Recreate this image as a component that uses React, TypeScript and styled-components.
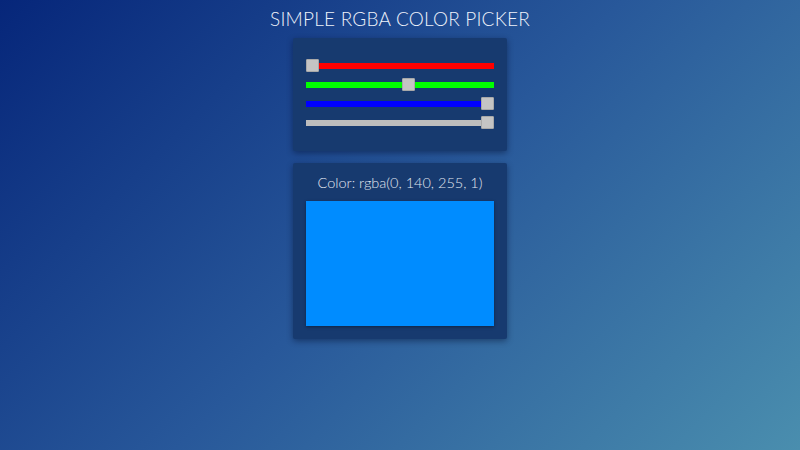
import { useState } from "react";
import styled, { createGlobalStyle } from "styled-components";

const GlobalStyle = createGlobalStyle`
  html, body {
    margin: 0;
    padding: 0;
    height: 100%;
  }
  body {
    font-family: Lato, "Open Sans", sans-serif;
    background: linear-gradient(135deg, #06267a 0%, #28589a 50%, #4a8eae 100%);
    min-height: 450px;
    color: #e8eef8;
  }
`;

type Channel = "r" | "g" | "b" | "a";

const tracks: { key: Channel; color: string; max: number; step: number }[] = [
  { key: "r", color: "#ff0000", max: 255, step: 1 },
  { key: "g", color: "#00ff00", max: 255, step: 1 },
  { key: "b", color: "#0000ff", max: 255, step: 1 },
  { key: "a", color: "#bdbdbd", max: 1, step: 0.01 },
];

export default function App() {
  const [rgba, setRgba] = useState({ r: 0, g: 140, b: 255, a: 1 });
  const value = `rgba(${rgba.r}, ${rgba.g}, ${rgba.b}, ${rgba.a})`;

  return (
    <Page>
      <GlobalStyle />
      <Title>SIMPLE RGBA COLOR PICKER</Title>
      <Card>
        <Sliders>
          {tracks.map((t) => (
            <Slider
              key={t.key}
              type="range"
              min={0}
              max={t.max}
              step={t.step}
              value={rgba[t.key]}
              $track={t.color}
              onChange={(e) =>
                setRgba((prev) => ({ ...prev, [t.key]: Number(e.target.value) }))
              }
            />
          ))}
        </Sliders>
      </Card>
      <Card>
        <Label>Color: {value}</Label>
        <Swatch style={{ background: value }} />
      </Card>
    </Page>
  );
}

const Page = styled.main`
  display: flex;
  flex-direction: column;
  align-items: center;
  padding-top: 7px;
`;

const Title = styled.h1`
  margin: 0 0 8px;
  font-size: 19px;
  font-weight: 300;
  letter-spacing: 0.2px;
  color: #eef2fa;
`;

const Card = styled.section`
  width: 214px;
  box-sizing: border-box;
  padding: 13px;
  margin-bottom: 12px;
  background: #173a6f;
  border-radius: 2px;
  box-shadow: 0 2px 6px rgba(0, 10, 40, 0.45);
`;

const Sliders = styled.div`
  display: flex;
  flex-direction: column;
  gap: 6px;
  padding: 8px 0 9px;
`;

const Slider = styled.input<{ $track: string }>`
  -webkit-appearance: none;
  appearance: none;
  display: block;
  width: 100%;
  height: 13px;
  margin: 0;
  background: transparent;
  outline: none;

  &::-webkit-slider-runnable-track {
    height: 6px;
    background: ${(p) => p.$track};
  }

  &::-webkit-slider-thumb {
    -webkit-appearance: none;
    width: 13px;
    height: 13px;
    margin-top: -3.5px;
    background: #c4c4c4;
    border: 1px solid #a8a8a8;
    box-sizing: border-box;
    border-radius: 1px;
  }
`;

const Label = styled.p`
  margin: 0 0 11px;
  text-align: center;
  font-size: 14.5px;
  line-height: 14px;
  font-weight: 300;
  color: #e0e6f0;
`;

const Swatch = styled.div`
  height: 125px;
  box-shadow: 0 1px 3px rgba(0, 0, 0, 0.4);
`;
